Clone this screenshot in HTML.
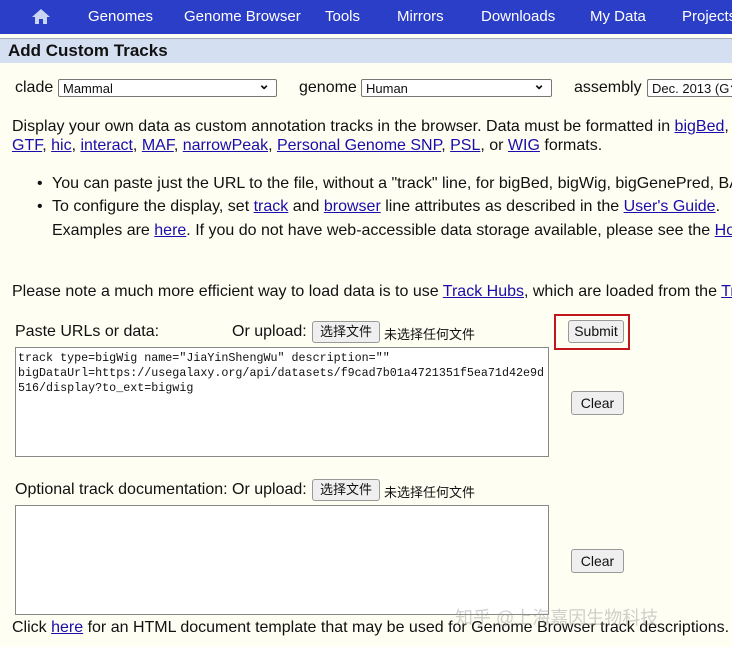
<!DOCTYPE html>
<html><head><meta charset="utf-8"><style>
body{margin:0;width:732px;height:647px;overflow:hidden;background:#fffef2;font-family:"Liberation Sans","Noto Sans CJK SC",sans-serif;font-size:16px;color:#111;position:relative}
.a{position:absolute;white-space:nowrap}
a{color:#1a0dab;text-decoration:underline}
.nav{position:absolute;left:0;top:0;width:732px;height:34px;background:#2b3ec7}
.nav span{position:absolute;top:8px;color:#fff;font-size:15px}
.hd{position:absolute;left:0;top:38px;width:732px;height:24px;background:#d5dff2;border-top:1px solid #aab}
.sel{position:absolute;height:18px;border:1px solid #777;background:#fff;font-size:13px;padding-left:4px;line-height:18px;border-radius:2px;box-sizing:border-box}
.sel:after{content:"⌄";position:absolute;right:6px;top:-5px;font-size:14px;font-weight:bold}
.btn{position:absolute;background:#efefef;border:1px solid #999;border-radius:3px;font-size:14px;text-align:center;box-sizing:border-box}
.ta{position:absolute;background:#fff;border:1px solid #888;box-sizing:border-box}
.mono{font-family:"Liberation Mono",monospace;font-size:11.7px;line-height:15px}
</style></head><body>
<div class="nav">
<svg class="a" style="left:31px;top:8px" width="20" height="17" viewBox="0 0 20 17"><path d="M10 1L1 9h3v7h4v-5h4v5h4V9h3z" fill="#c9d4f2"/></svg>
<span style="left:88px">Genomes</span><span style="left:184px">Genome Browser</span><span style="left:325px">Tools</span><span style="left:397px">Mirrors</span><span style="left:481px">Downloads</span><span style="left:590px">My Data</span><span style="left:682px">Projects</span>
</div>
<div class="hd"><span class="a" style="left:8px;top:2px;font-weight:bold;font-size:17px">Add Custom Tracks</span></div>
<span class="a" style="left:15px;top:79px">clade</span>
<div class="sel" style="left:58px;top:79px;width:219px">Mammal</div>
<span class="a" style="left:299px;top:79px">genome</span>
<div class="sel" style="left:361px;top:79px;width:191px">Human</div>
<span class="a" style="left:574px;top:79px">assembly</span>
<div class="sel" style="left:647px;top:79px;width:100px">Dec. 2013 (G</div>
<div class="a" style="left:12px;top:118px">Display your own data as custom annotation tracks in the browser. Data must be formatted in <a>bigBed</a>,</div>
<div class="a" style="left:12px;top:137px"><a>GTF</a>, <a>hic</a>, <a>interact</a>, <a>MAF</a>, <a>narrowPeak</a>, <a>Personal Genome SNP</a>, <a>PSL</a>, or <a>WIG</a> formats.</div>
<span class="a" style="left:37px;top:175px">•</span><div class="a" style="left:52px;top:175px">You can paste just the URL to the file, without a "track" line, for bigBed, bigWig, bigGenePred, BA</div>
<span class="a" style="left:37px;top:198px">•</span><div class="a" style="left:52px;top:198px">To configure the display, set <a>track</a> and <a>browser</a> line attributes as described in the <a>User's Guide</a>.</div>
<div class="a" style="left:52px;top:222px">Examples are <a>here</a>. If you do not have web-accessible data storage available, please see the <a>Ho</a></div>
<div class="a" style="left:12px;top:283px">Please note a much more efficient way to load data is to use <a>Track Hubs</a>, which are loaded from the <a>Tr</a></div>
<span class="a" style="left:15px;top:323px">Paste URLs or data:</span>
<span class="a" style="left:232px;top:323px">Or upload:</span>
<div class="btn" style="left:312px;top:321px;width:68px;height:22px;line-height:20px;font-size:13px">选择文件</div>
<span class="a" style="left:384px;top:324px;font-size:13px">未选择任何文件</span>
<div class="a" style="left:554px;top:314px;width:76px;height:36px;border:2px solid #c0161c;box-sizing:border-box"></div>
<div class="btn" style="left:568px;top:320px;width:56px;height:23px;line-height:21px">Submit</div>
<div class="ta mono" style="left:15px;top:347px;width:534px;height:110px;padding:3px 2px;white-space:pre">track type=bigWig name="JiaYinShengWu" description=""
bigDataUrl=https://usegalaxy.org/api/datasets/f9cad7b01a4721351f5ea71d42e9d
516/display?to_ext=bigwig</div>
<div class="btn" style="left:571px;top:391px;width:53px;height:24px;line-height:22px">Clear</div>
<span class="a" style="left:15px;top:481px">Optional track documentation:</span>
<span class="a" style="left:232px;top:481px">Or upload:</span>
<div class="btn" style="left:312px;top:479px;width:68px;height:22px;line-height:20px;font-size:13px">选择文件</div>
<span class="a" style="left:384px;top:482px;font-size:13px">未选择任何文件</span>
<div class="ta" style="left:15px;top:505px;width:534px;height:110px"></div>
<div class="btn" style="left:571px;top:549px;width:53px;height:24px;line-height:22px">Clear</div>
<div class="a" style="left:12px;top:619px">Click <a>here</a> for an HTML document template that may be used for Genome Browser track descriptions.</div>
<span class="a" style="left:455px;top:604px;font-size:18px;color:rgba(150,150,150,0.45)">知乎 @上海嘉因生物科技</span>
</body></html>
